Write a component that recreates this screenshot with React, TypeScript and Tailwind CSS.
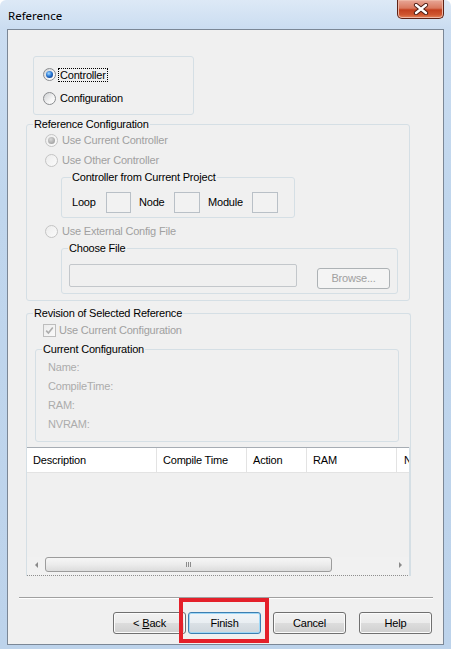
import React from "react";

type RadioProps = { checked?: boolean; disabled?: boolean };

function Radio({ checked, disabled }: RadioProps) {
  const ring = disabled
    ? "border-[#c4c4c4] bg-[linear-gradient(135deg,#ececec,#fbfbfb)]"
    : "border-[#8a8c8f] bg-[linear-gradient(135deg,#cfd1d4,#f4f4f4_60%,#ffffff)]";
  const dot = disabled
    ? "bg-[radial-gradient(circle_at_40%_35%,#d8d8d8,#a6a6a6_70%)]"
    : "bg-[radial-gradient(circle_at_40%_35%,#a8dcff,#2a79d6_45%,#0d3a86_85%)]";
  return (
    <span
      className={`flex h-[13px] w-[13px] shrink-0 items-center justify-center rounded-full border ${ring}`}
    >
      {checked && <span className={`h-[7px] w-[7px] rounded-full ${dot}`} />}
    </span>
  );
}

function DisabledCheck() {
  return (
    <span className="flex h-[13px] w-[13px] shrink-0 items-center justify-center border border-[#bdbdbd] bg-[linear-gradient(135deg,#ececec,#fafafa)]">
      <svg width="9" height="9" viewBox="0 0 9 9">
        <path d="M1.2 4.6 L3.4 7 L7.8 1.4" fill="none" stroke="#adadad" strokeWidth="1.6" />
      </svg>
    </span>
  );
}

function SmallBox({ w }: { w: string }) {
  return <span className={`h-[21px] ${w} shrink-0 border border-[#b9c0c7] bg-[#f2f2f2]`} />;
}

function WinButton({
  children,
  primary,
  className,
}: {
  children: React.ReactNode;
  primary?: boolean;
  className?: string;
}) {
  const look = primary
    ? "border-[#3c7fb1] bg-[linear-gradient(180deg,#f1f5f8_0%,#e9eef2_50%,#dbe1e6_50%,#cfd6dc_100%)] shadow-[inset_0_0_0_1px_#9fd8f7]"
    : "border-[#707070] bg-[linear-gradient(180deg,#f2f2f2_0%,#ebebeb_50%,#dddddd_50%,#cfcfcf_100%)] shadow-[inset_0_0_0_1px_#fbfbfb]";
  return (
    <div
      className={`flex h-[22px] w-[73px] shrink-0 items-center justify-center rounded-[3px] border ${look} ${className ?? ""}`}
    >
      {children}
    </div>
  );
}

export default function App() {
  return (
    <div className="relative h-[652px] w-[451px] overflow-hidden bg-white font-[family-name:'Liberation_Sans',Arial,sans-serif] text-[11px] leading-[13px] tracking-[-0.2px] text-black">
      <div className="h-[649px] w-[451px] rounded-t-[6px] bg-[linear-gradient(180deg,#dde9f6_0px,#cbddf1_28px,#c0d6ed_200px,#bdd3eb_100%)]">
        {/* caption */}
        <div className="flex h-[29px] items-start justify-between">
          <div className="pl-[8px] pt-[8px] font-[family-name:'Noto_Sans',sans-serif] text-[11.5px] leading-[15px] tracking-normal text-black">
            Reference
          </div>
          <div className="mr-[7px] flex h-[19px] w-[47px] items-center justify-center rounded-b-[5px] border border-t-0 border-[#5e2216] bg-[linear-gradient(180deg,#e8a797_0%,#d9795f_45%,#c3401f_55%,#cf5630_82%,#e5865c_100%)] shadow-[inset_0_0_0_1px_#eeb6a4]">
            <svg width="16" height="12" viewBox="0 0 16 12">
              <path d="M3 2 L13 10 M13 2 L3 10" stroke="#4a1a12" strokeWidth="4.2" strokeLinecap="round" />
              <path d="M3 2 L13 10 M13 2 L3 10" stroke="#ffffff" strokeWidth="2.4" strokeLinecap="round" />
            </svg>
          </div>
        </div>

        {/* client area */}
        <div className="ml-[7px] h-[616px] w-[437px] border border-[#7b8796] bg-[#f0f0f0]">
          {/* mode choice */}
          <div className="ml-[25px] mt-[26px] h-[59px] w-[161px] rounded-[3px] border border-[#d5dfe5] pl-[9px] pt-[11px]">
            <div className="flex h-[13px] items-center">
              <Radio checked />
              <span className="ml-[2px] border border-dotted border-black px-[1px] leading-[12px]">Controller</span>
            </div>
            <div className="mt-[11px] flex h-[13px] items-center">
              <Radio />
              <span className="ml-[4px]">Configuration</span>
            </div>
          </div>

          {/* Reference Configuration */}
          <fieldset className="ml-[18px] mt-[3px] w-[384px] rounded-[3px] border border-[#d5dfe5] pb-[6px]">
            <legend className="ml-[6px] px-[1px] leading-[13px]">Reference Configuration</legend>
            <div className="ml-[18px] mt-[3px] flex h-[13px] items-center text-[#a0a0a0]">
              <Radio checked disabled />
              <span className="ml-[4px]">Use Current Controller</span>
            </div>
            <div className="ml-[18px] mt-[7px] flex h-[13px] items-center text-[#a0a0a0]">
              <Radio disabled />
              <span className="ml-[4px]">Use Other Controller</span>
            </div>

            <fieldset className="ml-[34px] mt-[4px] w-[234px] rounded-[3px] border border-[#d5dfe5] pb-[4px]">
              <legend className="ml-[9px] px-[1px] leading-[13px]">Controller from Current Project</legend>
              <div className="mt-[8px] flex h-[21px] items-center pl-[10px]">
                <span className="w-[34px] shrink-0">Loop</span>
                <SmallBox w="w-[25px]" />
                <span className="ml-[8px] w-[35px] shrink-0">Node</span>
                <SmallBox w="w-[26px]" />
                <span className="ml-[8px] w-[44px] shrink-0">Module</span>
                <SmallBox w="w-[26px]" />
              </div>
            </fieldset>

            <div className="ml-[18px] mt-[7px] flex h-[13px] items-center text-[#a0a0a0]">
              <Radio disabled />
              <span className="ml-[4px]">Use External Config File</span>
            </div>

            <fieldset className="ml-[34px] mt-[4px] w-[337px] rounded-[3px] border border-[#d5dfe5] pb-[4px]">
              <legend className="ml-[6px] px-[1px] leading-[13px]">Choose File</legend>
              <div className="mt-[9px] flex items-start pl-[7px]">
                <div className="h-[23px] w-[228px] shrink-0 rounded-[2px] border border-[#c3c7cb] bg-[#f0f0f0]" />
                <div className="ml-[20px] mt-[4px] flex h-[21px] w-[73px] shrink-0 items-center justify-center rounded-[3px] border border-[#adb2b5] bg-[#f4f4f4] text-[#a0a0a0]">
                  Browse...
                </div>
              </div>
            </fieldset>
          </fieldset>

          {/* Revision of Selected Reference */}
          <fieldset className="ml-[18px] mt-[6px] w-[384px] rounded-t-[3px] border border-b-0 border-[#d5dfe5]">
            <legend className="ml-[6px] px-[1px] leading-[13px]">Revision of Selected Reference</legend>
            <div className="ml-[16px] mt-[4px] flex h-[13px] items-center text-[#a0a0a0]">
              <DisabledCheck />
              <span className="ml-[3px]">Use Current Configuration</span>
            </div>

            <fieldset className="ml-[8px] mt-[6px] w-[364px] rounded-[3px] border border-[#d5dfe5] pb-[7px]">
              <legend className="ml-[6px] px-[1px] leading-[13px]">Current Configuration</legend>
              <div className="mt-[2px] pl-[12px] text-[#acacac]">
                <div className="flex h-[19px] items-center">Name:</div>
                <div className="flex h-[19px] items-center">CompileTime:</div>
                <div className="flex h-[19px] items-center">RAM:</div>
                <div className="flex h-[19px] items-center">NVRAM:</div>
              </div>
            </fieldset>

            {/* list view */}
            <div className="-ml-px mt-[5px] w-[384px] border-x border-[#d5dfe5]">
              <div className="flex h-[26px] border-y border-t-[#a6acb3] border-b-[#e3e3e3] bg-white">
                <div className="flex w-[130px] shrink-0 items-center border-r border-[#e3e3e3] pl-[6px]">Description</div>
                <div className="flex w-[90px] shrink-0 items-center border-r border-[#e3e3e3] pl-[6px]">Compile Time</div>
                <div className="flex w-[60px] shrink-0 items-center border-r border-[#e3e3e3] pl-[6px]">Action</div>
                <div className="flex w-[90px] shrink-0 items-center border-r border-[#e3e3e3] pl-[6px]">RAM</div>
                <div className="flex min-w-0 flex-1 items-center overflow-hidden pl-[7px]">
                  <span className="w-[5px] overflow-hidden">N</span>
                </div>
              </div>
              <div className="h-[84px] bg-[#f0f0f0]" />
              <div className="flex h-[18px] items-start bg-[#f1f1f1]">
                <div className="flex h-[15px] w-[18px] shrink-0 items-center justify-center">
                  <span className="h-0 w-0 border-y-[3px] border-r-[3px] border-y-transparent border-r-[#8a8a8a]" />
                </div>
                <div className="flex h-[15px] w-[287px] shrink-0 items-center justify-center rounded-[3px] border border-[#9c9c9c] bg-[linear-gradient(180deg,#f6f6f6_0%,#ececec_50%,#dcdcdc_100%)]">
                  <span className="flex gap-[1px]">
                    <span className="h-[5px] w-px bg-[#8c8c8c]" />
                    <span className="h-[5px] w-px bg-[#8c8c8c]" />
                    <span className="h-[5px] w-px bg-[#8c8c8c]" />
                  </span>
                </div>
                <div className="flex-1" />
                <div className="flex h-[15px] w-[17px] shrink-0 items-center justify-center">
                  <span className="h-0 w-0 border-y-[3px] border-l-[3px] border-y-transparent border-l-[#8a8a8a]" />
                </div>
              </div>
              <div className="h-px bg-[repeating-linear-gradient(90deg,#8e8e8e_0px,#8e8e8e_1px,transparent_1px,transparent_2px)]" />
            </div>
          </fieldset>

          {/* separator */}
          <div className="ml-[11px] mt-[21px] h-[2px] w-[414px] border-t border-b border-t-[#a0a0a0] border-b-white" />

          {/* buttons */}
          <div className="mt-[13px] flex pl-[105px]">
            <WinButton>
              &lt; <span className="ml-[3px] underline">B</span>ack
            </WinButton>
            <WinButton primary className="ml-[2px]">
              Finish
            </WinButton>
            <WinButton className="ml-[12px]">Cancel</WinButton>
            <WinButton className="ml-[13px]">Help</WinButton>
          </div>
        </div>
      </div>

      {/* highlight around the Finish button */}
      <div className="absolute left-[179px] top-[598px] h-[45px] w-[90px] border-4 border-[#e4202a]" />
    </div>
  );
}
